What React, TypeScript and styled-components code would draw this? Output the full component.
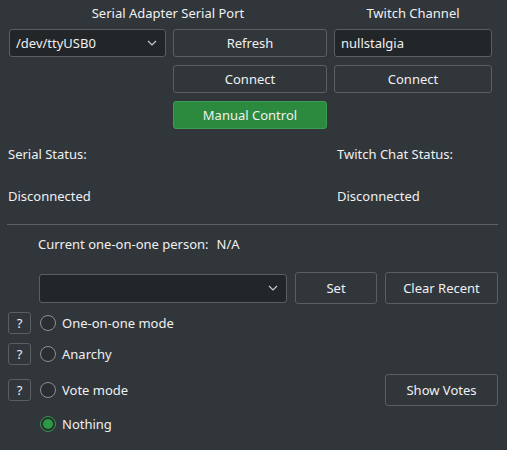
import styled, { createGlobalStyle } from 'styled-components';

const GlobalStyle = createGlobalStyle`
    html, body {
        margin: 0;
        padding: 0;
        background-color: #31363b;
        color: #eff0f1;
        font-family: "Noto Sans", "DejaVu Sans", sans-serif;
        font-size: 13px;
    }
`

const Page = styled.div`
    width: 507px;
    height: 450px;
    overflow: hidden;
    display: flex;
    flex-direction: column;
`

const TopGrid = styled.div`
    display: grid;
    grid-template-columns: 157px 154px 158px;
    grid-template-rows: 16px 28px 28px 28px;
    column-gap: 7px;
    row-gap: 8px;
    padding: 5px 0 0 9px;
`

const Title = styled.div<{ $span?: number }>`
    grid-column: span ${(p) => p.$span || 1};
    line-height: 16px;
    text-align: center;
`

const Field = styled.div<{ $h?: number }>`
    box-sizing: border-box;
    height: ${(p) => p.$h || 28}px;
    background-color: #232629;
    border: 1px solid #5b5f63;
    border-radius: 3px;
    display: flex;
    align-items: center;
    padding: 0 8px 0 6px;
`

const FieldText = styled.span`
    flex: 1;
`

const Button = styled.button<{ $green?: boolean; $h?: number }>`
    box-sizing: border-box;
    height: ${(p) => p.$h || 28}px;
    background-color: ${(p) => (p.$green ? '#2c8a3f' : '#31363b')};
    border: 1px solid ${(p) => (p.$green ? '#3c9c4f' : '#5b5f63')};
    border-radius: 3px;
    color: #eff0f1;
    font-family: inherit;
    font-size: 13px;
    padding: 0;
    cursor: pointer;
`

const Blank = styled.div``

const StatusGrid = styled.div`
    display: grid;
    grid-template-columns: 329px 1fr;
    grid-auto-rows: 18px;
    row-gap: 24px;
    padding-left: 8px;
    margin-top: 16px;
    line-height: 18px;
`

const Divider = styled.hr`
    margin: 19px 9px 0 7px;
    border: none;
    border-top: 1px solid #5d6165;
    height: 0;
`

const PersonLine = styled.div`
    display: flex;
    gap: 8px;
    height: 18px;
    line-height: 18px;
    padding-left: 38px;
    margin-top: 10px;
`

const ControlRow = styled.div`
    display: grid;
    grid-template-columns: 248px 82px 113px;
    column-gap: 8px;
    align-items: center;
    height: 32px;
    padding-left: 39px;
    margin-top: 19px;
`

const ModeList = styled.div`
    display: flex;
    flex-direction: column;
    gap: 9px;
    margin-top: 8px;
    padding: 0 9px 0 8px;
`

const ModeRow = styled.div<{ $h: number }>`
    display: flex;
    align-items: center;
    height: ${(p) => p.$h}px;
`

const Help = styled.div`
    box-sizing: border-box;
    width: 23px;
    height: 22px;
    border: 1px solid #5b5f63;
    border-radius: 3px;
    display: flex;
    align-items: center;
    justify-content: center;
    margin-right: 9px;
`

const HelpGap = styled.div`
    width: 32px;
`

const Radio = styled.span<{ $on?: boolean }>`
    box-sizing: border-box;
    width: 16px;
    height: 16px;
    border-radius: 50%;
    border: 1px solid ${(p) => (p.$on ? '#2d9a48' : '#8d9093')};
    background-color: #2b2f33;
    display: flex;
    align-items: center;
    justify-content: center;
    margin-right: 6px;
    &::after {
        content: '';
        display: ${(p) => (p.$on ? 'block' : 'none')};
        width: 10px;
        height: 10px;
        border-radius: 50%;
        background-color: #2a9a47;
    }
`

const ShowVotes = styled(Button)`
    width: 113px;
    margin-left: auto;
`

const Chevron = () => (
    <svg width="10" height="6" viewBox="0 0 10 6">
        <polyline points="1,1 5,5 9,1" fill="none" stroke="#c8cacc" strokeWidth="1.2" />
    </svg>
)

const modes = [
    { label: 'One-on-one mode', help: true, h: 22 },
    { label: 'Anarchy', help: true, h: 22 },
    { label: 'Vote mode', help: true, h: 32, votes: true },
    { label: 'Nothing', help: false, h: 18, on: true },
]

const App = () => {
    return (
        <>
            <GlobalStyle />
            <Page>
                <TopGrid>
                    <Title $span={2}>Serial Adapter Serial Port</Title>
                    <Title>Twitch Channel</Title>
                    <Field>
                        <FieldText>/dev/ttyUSB0</FieldText>
                        <Chevron />
                    </Field>
                    <Button>Refresh</Button>
                    <Field>
                        <FieldText>nullstalgia</FieldText>
                    </Field>
                    <Blank />
                    <Button>Connect</Button>
                    <Button>Connect</Button>
                    <Blank />
                    <Button $green>Manual Control</Button>
                </TopGrid>

                <StatusGrid>
                    <span>Serial Status:</span>
                    <span>Twitch Chat Status:</span>
                    <span>Disconnected</span>
                    <span>Disconnected</span>
                </StatusGrid>

                <Divider />

                <PersonLine>
                    <span>Current one-on-one person:</span>
                    <span>N/A</span>
                </PersonLine>

                <ControlRow>
                    <Field $h={29}>
                        <FieldText />
                        <Chevron />
                    </Field>
                    <Button $h={32}>Set</Button>
                    <Button $h={32}>Clear Recent</Button>
                </ControlRow>

                <ModeList>
                    {modes.map((m) => (
                        <ModeRow key={m.label} $h={m.h}>
                            {m.help ? <Help>?</Help> : <HelpGap />}
                            <Radio $on={m.on} />
                            <span>{m.label}</span>
                            {m.votes && <ShowVotes $h={32}>Show Votes</ShowVotes>}
                        </ModeRow>
                    ))}
                </ModeList>
            </Page>
        </>
    )
}

export default App;
